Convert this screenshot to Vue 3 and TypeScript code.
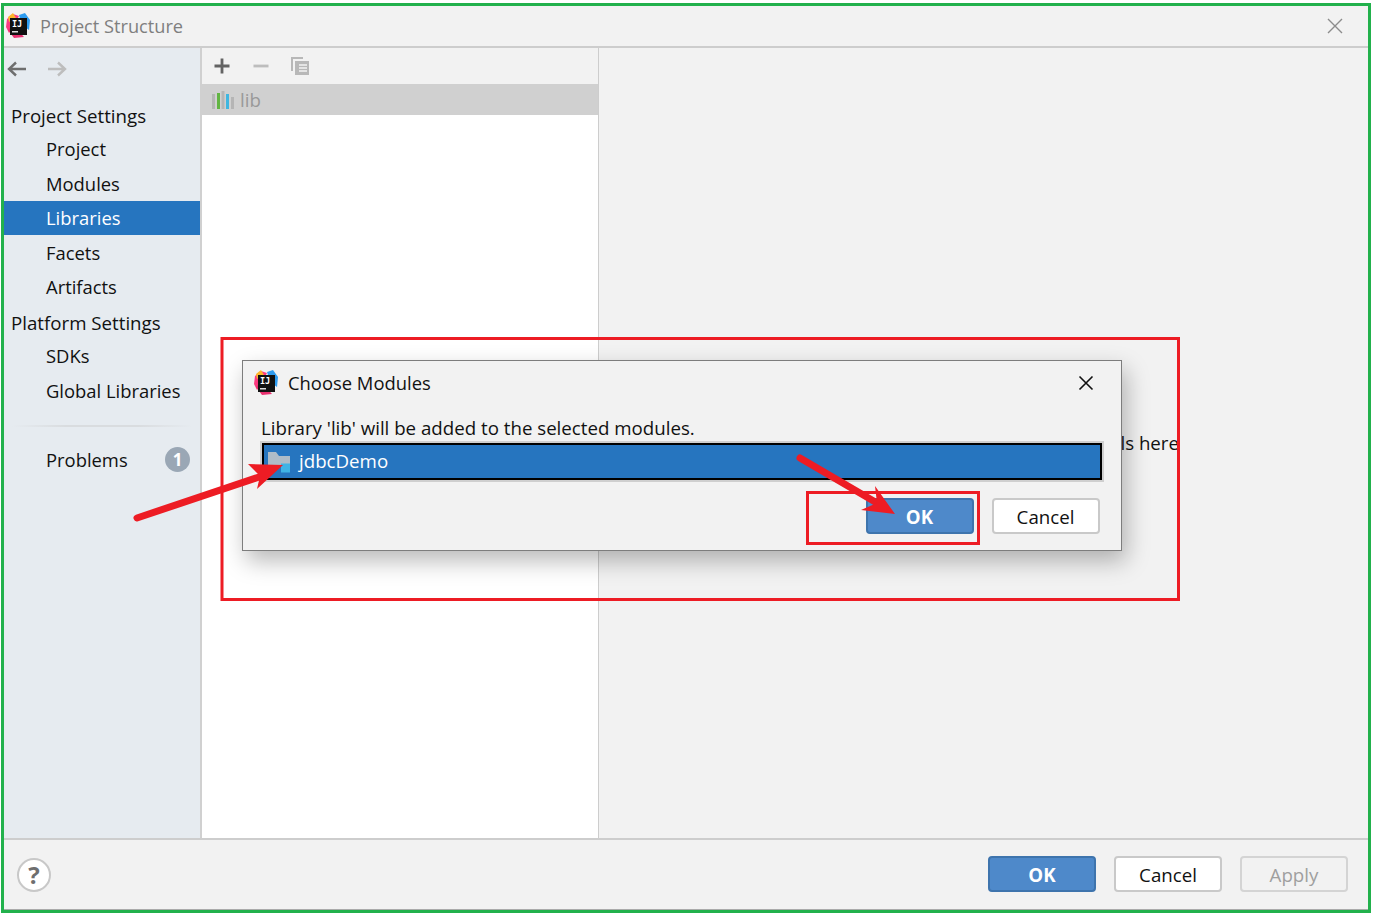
<script setup lang="ts">
const settings: string[] = ['Project', 'Modules', 'Libraries', 'Facets', 'Artifacts']
const platform: string[] = ['SDKs', 'Global Libraries']
</script>

<template>
  <div class="page">
    <div class="frame">
      <header class="titlebar">
        <svg class="logo" width="27" height="26" viewBox="0 0 27 26">
          <path d="M3 6 L9 1 L15 3 L9 14 L5 20 L2 14Z" fill="#fc3a80" />
          <path d="M4 4 L9 0 L12 5 L5 9Z" fill="#fdb62c" />
          <path d="M15 2 L21 0 L26 7 L25 17 L18 12Z" fill="#2e9cf0" />
          <path d="M4 17 L10 25 L20 24 L9 12Z" fill="#e8306f" />
          <rect x="6" y="5" width="17" height="17" fill="#111" />
          <text x="8" y="13.500" class="logo-text">IJ</text>
          <rect x="8" y="18" width="6" height="1.5" fill="#ddd" />
        </svg>
        <span class="window-title">Project Structure</span>
        <svg class="win-close" width="16" height="16" viewBox="0 0 16 16">
          <path d="M1 1 L15 15 M15 1 L1 15" stroke="#8c8c8c" stroke-width="1.4" fill="none" />
        </svg>
      </header>

      <div class="body">
        <aside class="sidebar">
          <div class="nav-arrows">
            <svg width="20" height="16" viewBox="0 0 20 16">
              <path d="M19 8 H2 M9 1.5 L2 8 L9 14.5" stroke="#6e6e6e" stroke-width="2.4" fill="none" />
            </svg>
            <svg width="20" height="16" viewBox="0 0 20 16">
              <path d="M1 8 H18 M11 1.5 L18 8 L11 14.5" stroke="#bdbdbd" stroke-width="2.4" fill="none" />
            </svg>
          </div>
          <div class="group group-first">Project Settings</div>
          <div v-for="item in settings" :key="item" class="item" :class="{ selected: item === 'Libraries' }">{{ item }}</div>
          <div class="group">Platform Settings</div>
          <div v-for="item in platform" :key="item" class="item">{{ item }}</div>
          <div class="divider"></div>
          <div class="problems">
            <span>Problems</span>
            <span class="badge">1</span>
          </div>
        </aside>

        <section class="list">
          <div class="toolbar">
            <svg width="18" height="18" viewBox="0 0 18 18">
              <path d="M9 1.5 V16.5 M1.500 9 H16.5" stroke="#636363" stroke-width="2.8" fill="none" />
            </svg>
            <svg width="18" height="18" viewBox="0 0 18 18">
              <path d="M1.500 9 H16.5" stroke="#bdbdbd" stroke-width="2.8" fill="none" />
            </svg>
            <svg class="copy-icon" width="20" height="20" viewBox="0 0 20 20">
              <path d="M1 1 H13 V3 H3 V15 H1Z" fill="#b8b8b8" />
              <rect x="5" y="5" width="14" height="14" fill="#b8b8b8" />
              <path d="M9 9 H17 M9 12 H17 M9 15 H17" stroke="#f2f2f2" stroke-width="1.4" />
            </svg>
          </div>
          <div class="lib-row">
            <svg width="22" height="20" viewBox="0 0 22 20">
              <rect x="0" y="4" width="3" height="15" fill="#b5b5b5" />
              <rect x="5" y="3" width="3" height="16" fill="#62b543" />
              <rect x="9.5" y="1" width="3" height="18" fill="#b5b5b5" />
              <rect x="14" y="4" width="3" height="15" fill="#40b6e0" />
              <rect x="19" y="7" width="3" height="12" fill="#b5b5b5" />
            </svg>
            <span>lib</span>
          </div>
        </section>

        <main class="details">
          <span class="hint">Select a library to view or edit its details here</span>
        </main>
      </div>

      <footer class="footer">
        <button class="help" type="button">?</button>
        <div class="actions">
          <button class="btn primary" type="button">OK</button>
          <button class="btn" type="button">Cancel</button>
          <button class="btn disabled" type="button">Apply</button>
        </div>
      </footer>
    </div>

    <div class="dialog">
      <div class="dialog-title">
        <svg class="logo" width="27" height="26" viewBox="0 0 27 26">
          <path d="M3 6 L9 1 L15 3 L9 14 L5 20 L2 14Z" fill="#fc3a80" />
          <path d="M4 4 L9 0 L12 5 L5 9Z" fill="#fdb62c" />
          <path d="M15 2 L21 0 L26 7 L25 17 L18 12Z" fill="#2e9cf0" />
          <path d="M4 17 L10 25 L20 24 L9 12Z" fill="#e8306f" />
          <rect x="6" y="5" width="17" height="17" fill="#111" />
          <text x="8" y="13.500" class="logo-text">IJ</text>
          <rect x="8" y="18" width="6" height="1.5" fill="#ddd" />
        </svg>
        <span class="dialog-name">Choose Modules</span>
        <svg class="dlg-close" width="16" height="16" viewBox="0 0 16 16">
          <path d="M1.5 1.5 L14.5 14.5 M14.5 1.5 L1.5 14.5" stroke="#111" stroke-width="1.6" fill="none" />
        </svg>
      </div>
      <div class="dialog-text">Library 'lib' will be added to the selected modules.</div>
      <div class="module">
        <svg width="24" height="23" viewBox="0 0 24 23">
          <path d="M1 2 H9 L12 6 H23 V17 H1Z" fill="#aebcc8" />
          <rect x="14" y="13.500" width="9" height="9" fill="#3fb3e6" />
        </svg>
        <span class="module-name">jdbcDemo</span>
      </div>
      <div class="dialog-actions">
        <button class="btn primary" type="button">OK</button>
        <button class="btn" type="button">Cancel</button>
      </div>
    </div>

    <svg class="marks" width="1373" height="915" viewBox="0 0 1373 915">
      <rect x="222" y="338.5" width="956.500" height="261" fill="none" stroke="#ed1c24" stroke-width="3" />
      <rect x="807.5" y="492.5" width="171" height="51" fill="none" stroke="#ed1c24" stroke-width="3" />
      <path d="M137 518 L262 476" stroke="#ed1c24" stroke-width="7" stroke-linecap="round" fill="none" />
      <path d="M248 464 L283 465 L257 489 L260 476Z" fill="#ed1c24" />
      <path d="M800 458 L877 503" stroke="#ed1c24" stroke-width="7" stroke-linecap="round" fill="none" />
      <path d="M875 486 L895 514 L861 510 L877 503Z" fill="#ed1c24" />
    </svg>
  </div>
</template>

<style scoped>
.page {
  position: relative;
  width: 1373px;
  height: 915px;
  overflow: hidden;
  background: #fff;
  font-family: "Open Sans", "Noto Sans", sans-serif;
  font-size: 18.7px;
  color: #111;
}
.frame {
  position: absolute;
  left: 1px;
  top: 3px;
  width: 1370px;
  height: 910px;
  box-sizing: border-box;
  border: 3px solid #22b14c;
  display: flex;
  flex-direction: column;
  background: #f2f2f2;
}
.titlebar {
  flex: none;
  height: 40px;
  display: flex;
  align-items: center;
  border-bottom: 2px solid #cdcdcd;
  position: relative;
}
.logo {
  flex: none;
}
.logo-text {
  font-family: "DejaVu Sans Mono", monospace;
  font-size: 8.5px;
  font-weight: 700;
  fill: #fff;
}
.window-title {
  margin-left: 9px;
  font-size: 18.2px;
  color: #7f7f7f;
}
.win-close {
  position: absolute;
  right: 25px;
  top: 12px;
}
.body {
  flex: 1;
  min-height: 0;
  display: flex;
}
.sidebar {
  flex: none;
  width: 196px;
  background: #e6ebf0;
  border-right: 2px solid #d0d0d0;
}
.nav-arrows {
  height: 42px;
  display: flex;
  align-items: center;
  gap: 20px;
  padding-left: 3px;
}
.group {
  height: 33px;
  line-height: 34px;
  padding-left: 7px;
  margin-top: 2px;
}
.group-first {
  margin-top: 9px;
}
.item {
  height: 34px;
  margin-bottom: 0.5px;
  line-height: 34px;
  padding-left: 42px;
  font-size: 18.4px;
}
.item.selected {
  background: #2675bf;
  color: #fff;
}
.divider {
  height: 2px;
  margin: 17px 8px 0;
  background: linear-gradient(90deg, #e6ebf0, #d9dcdf 30%, #d9dcdf 70%, #e6ebf0);
}
.problems {
  display: flex;
  align-items: center;
  justify-content: space-between;
  height: 36px;
  margin-top: 15px;
  padding: 0 10px 0 42px;
  font-size: 18.4px;
}
.badge {
  width: 25px;
  height: 25px;
  border-radius: 50%;
  background: #9aa7b5;
  color: #fff;
  font-size: 17px;
  font-weight: 700;
  text-align: center;
  line-height: 25px;
}
.list {
  flex: none;
  width: 396px;
  background: #fff;
  border-right: 1px solid #cdcdcd;
}
.toolbar {
  height: 36px;
  display: flex;
  align-items: center;
  gap: 21px;
  padding-left: 11px;
  background: #f2f2f2;
}
.copy-icon {
  margin-left: -1px;
}
.lib-row {
  height: 31px;
  display: flex;
  align-items: center;
  gap: 6px;
  padding-left: 10px;
  background: #d0d0d0;
  color: #999;
}
.details {
  flex: 1;
  position: relative;
}
.hint {
  position: absolute;
  right: 189px;
  top: 382px;
  white-space: nowrap;
}
.footer {
  flex: none;
  height: 70px;
  box-sizing: content-box;
  border-top: 2px solid #cdcdcd;
  box-shadow: inset 0 -1px #aaa;
  display: flex;
  align-items: center;
  justify-content: space-between;
  padding: 0 20px 0 13px;
}
.help {
  width: 34px;
  height: 34px;
  padding: 0;
  border-radius: 50%;
  border: 2px solid #c8c8c8;
  background: #fff;
  color: #6e6e6e;
  font-family: inherit;
  font-size: 24px;
  font-weight: 700;
  line-height: 28px;
}
.actions {
  display: flex;
  gap: 18px;
  margin-bottom: 2px;
}
.btn {
  width: 108px;
  height: 36px;
  box-sizing: border-box;
  padding: 0;
  border: 2px solid #c9c9c9;
  border-radius: 4px;
  background: #fff;
  color: #111;
  font-family: inherit;
  font-size: 18.7px;
  line-height: 31px;
}
.btn.primary {
  background: #4e89ca;
  border-color: #3e74ad;
  color: #fff;
  font-weight: 700;
}
.btn.disabled {
  background: #f2f2f2;
  border-color: #d4d4d4;
  color: #9f9f9f;
}
.dialog {
  position: absolute;
  left: 242px;
  top: 360px;
  width: 880px;
  height: 191px;
  box-sizing: border-box;
  border: 1px solid #7d7d7d;
  background: #f2f2f2;
  box-shadow: 4px 10px 22px rgba(0, 0, 0, 0.28);
  display: flex;
  flex-direction: column;
}
.dialog-title {
  height: 44px;
  display: flex;
  align-items: center;
  gap: 9px;
  padding-left: 9px;
  position: relative;
}
.dialog-name {
  margin-bottom: 2px;
  font-size: 18.4px;
}
.dlg-close {
  position: absolute;
  right: 27px;
  top: 14px;
}
.dialog-text {
  margin-top: 8px;
  padding-left: 18px;
  height: 29px;
  line-height: 30px;
}
.module {
  margin: 1px 19px 0 19px;
  height: 37px;
  box-sizing: border-box;
  border: 2px solid #000;
  outline: 2px solid #cfcfcf;
  background: #2675bf;
  color: #fff;
  display: flex;
  align-items: center;
  gap: 8px;
  padding-left: 3px;
}
.module-name {
  margin-bottom: 2px;
}
.dialog-actions {
  display: flex;
  justify-content: flex-end;
  gap: 18px;
  margin-top: 18px;
  padding-right: 21.5px;
}
.marks {
  position: absolute;
  left: 0;
  top: 0;
  pointer-events: none;
}
</style>
